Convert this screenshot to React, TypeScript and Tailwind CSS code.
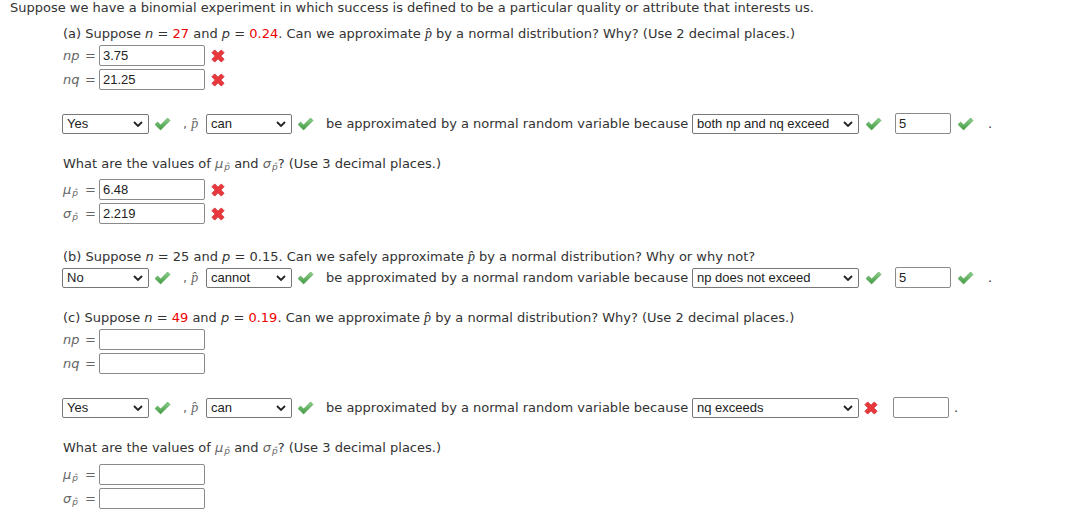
import React from "react";

const Check: React.FC = () => (
  <svg width="17" height="14" viewBox="0 0 17 14" className="shrink-0">
    <defs>
      <linearGradient id="chk" x1="0" y1="0" x2="0" y2="1">
        <stop offset="0" stopColor="#8fd18f" />
        <stop offset="1" stopColor="#3f9a3f" />
      </linearGradient>
    </defs>
    <path d="M1 7.5 L3.6 5 L6.6 8 L13.6 1 L16 3.5 L6.6 13 Z" fill="url(#chk)" stroke="#4a9a4a" strokeWidth="0.6" strokeLinejoin="round" />
  </svg>
);

const Cross: React.FC = () => (
  <svg width="16" height="16" viewBox="0 0 15 15" className="shrink-0">
    <path d="M1.8 4.4 L4.4 1.8 L7.5 4.9 L10.6 1.8 L13.2 4.4 L10.1 7.5 L13.2 10.6 L10.6 13.2 L7.5 10.1 L4.4 13.2 L1.8 10.6 L4.9 7.5 Z" fill="#e8383d" stroke="#d42a30" strokeWidth="0.8" strokeLinejoin="round" />
  </svg>
);

const Input: React.FC<{ value?: string; w: string }> = ({ value = "", w }) => (
  <div className={`${w} h-[21px] border border-[#8a8a8a] rounded-[2px] bg-white px-[3px] text-[13px] leading-[19px] text-[#222] font-['Liberation_Sans',Arial,sans-serif]`}>
    {value}
  </div>
);

const Select: React.FC<{ value: string; w: string }> = ({ value, w }) => (
  <div className={`${w} h-[20px] border border-[#767676] rounded-[2px] bg-white pl-[4px] pr-[5px] flex items-center justify-between text-[13px] text-[#222] font-['Liberation_Sans',Arial,sans-serif]`}>
    <span>{value}</span>
    <svg width="10" height="6" viewBox="0 0 10 6">
      <path d="M1 1 L5 5 L9 1" fill="none" stroke="#222" strokeWidth="1.8" />
    </svg>
  </div>
);

const PHat: React.FC = () => <i className="font-['Liberation_Serif',serif] text-[14px]">p̂</i>;

const Red: React.FC<{ children: React.ReactNode }> = ({ children }) => <span className="text-[#ee0000]">{children}</span>;

const Sym: React.FC<{ s: string }> = ({ s }) => (
  <span className="italic text-[#666]">
    {s}
    <sub className="text-[9px] not-italic ml-[1px] relative top-[2px]">
      <i>p̂</i>
    </sub>
  </span>
);

const FieldRow: React.FC<{ label: React.ReactNode; value?: string; mark?: "x"; mt: string }> = ({ label, value, mark, mt }) => (
  <div className={`flex items-center h-[21px] ${mt}`}>
    <div className="w-[36px] flex items-center text-[#666]">
      <span className="w-[22px] italic">{label}</span>
      <span>=</span>
    </div>
    <Input value={value} w="w-[106px]" />
    {mark === "x" && (
      <span className="ml-[5px]">
        <Cross />
      </span>
    )}
  </div>
);

const ChoiceRow: React.FC<{
  a: string;
  b: string;
  c: string;
  n?: string;
  cOk: boolean;
  nOk: boolean;
  mt: string;
}> = ({ a, b, c, n, cOk, nOk, mt }) => (
  <div className={`flex items-center h-[21px] ${mt}`}>
    <Select value={a} w="w-[87px]" />
    <span className="ml-[5px]">
      <Check />
    </span>
    <span className="ml-[12px] w-[23px] text-[#666]">
      , <PHat />
    </span>
    <Select value={b} w="w-[86px]" />
    <span className="ml-[5px]">
      <Check />
    </span>
    <span className="ml-[12px] w-[366px]">be approximated by a normal random variable because</span>
    <Select value={c} w="w-[167px]" />
    {cOk ? (
      <span className="ml-[6px]">
        <Check />
      </span>
    ) : (
      <span className="ml-[4px]">
        <Cross />
      </span>
    )}
    <span className={cOk ? "ml-[13px]" : "ml-[14px]"}>
      <Input value={n} w="w-[56px]" />
    </span>
    {nOk ? (
      <>
        <span className="ml-[6px]">
          <Check />
        </span>
        <span className="ml-[14px]">.</span>
      </>
    ) : (
      <span className="ml-[5px]">.</span>
    )}
  </div>
);

const ValuesLine: React.FC<{ mt: string }> = ({ mt }) => (
  <div className={`h-[16px] leading-[16px] ${mt}`}>
    What are the values of <Sym s="μ" /> and <Sym s="σ" />? (Use 3 decimal places.)
  </div>
);

export default function App() {
  return (
    <div className="w-[1078px] h-[523px] bg-white text-[13px] text-[#333] font-['DejaVu_Sans',Verdana,sans-serif] overflow-hidden">
      <div className="pl-[10px] h-[16px] leading-[16px]">
        Suppose we have a binomial experiment in which success is defined to be a particular quality or attribute that interests us.
      </div>
      <div className="pl-[63px]">
        <div className="h-[16px] leading-[16px] mt-[10px]">
          (a) Suppose <i>n</i> = <Red>27</Red> and <i>p</i> = <Red>0.24</Red>. Can we approximate <PHat /> by a normal distribution? Why? (Use 2 decimal places.)
        </div>
        <FieldRow label="np" value="3.75" mark="x" mt="mt-[3px]" />
        <FieldRow label="nq" value="21.25" mark="x" mt="mt-[3px]" />
        <div className="-ml-px">
          <ChoiceRow a="Yes" b="can" c="both np and nq exceed" n="5" cOk nOk mt="mt-[23px]" />
        </div>
        <ValuesLine mt="mt-[22px]" />
        <FieldRow label={<Sym s="μ" />} value="6.48" mark="x" mt="mt-[7px]" />
        <FieldRow label={<Sym s="σ" />} value="2.219" mark="x" mt="mt-[3px]" />
        <div className="h-[16px] leading-[16px] mt-[25px]">
          (b) Suppose <i>n</i> = 25 and <i>p</i> = 0.15. Can we safely approximate <PHat /> by a normal distribution? Why or why not?
        </div>
        <div className="-ml-px">
          <ChoiceRow a="No" b="cannot" c="np does not exceed" n="5" cOk nOk mt="mt-[2px]" />
        </div>
        <div className="h-[16px] leading-[16px] mt-[22px]">
          (c) Suppose <i>n</i> = <Red>49</Red> and <i>p</i> = <Red>0.19</Red>. Can we approximate <PHat /> by a normal distribution? Why? (Use 2 decimal places.)
        </div>
        <FieldRow label="np" mt="mt-[3px]" />
        <FieldRow label="nq" mt="mt-[3px]" />
        <div className="-ml-px">
          <ChoiceRow a="Yes" b="can" c="nq exceeds" cOk={false} nOk={false} mt="mt-[23px]" />
        </div>
        <ValuesLine mt="mt-[22px]" />
        <FieldRow label={<Sym s="μ" />} mt="mt-[8px]" />
        <FieldRow label={<Sym s="σ" />} mt="mt-[3px]" />
      </div>
    </div>
  );
}
